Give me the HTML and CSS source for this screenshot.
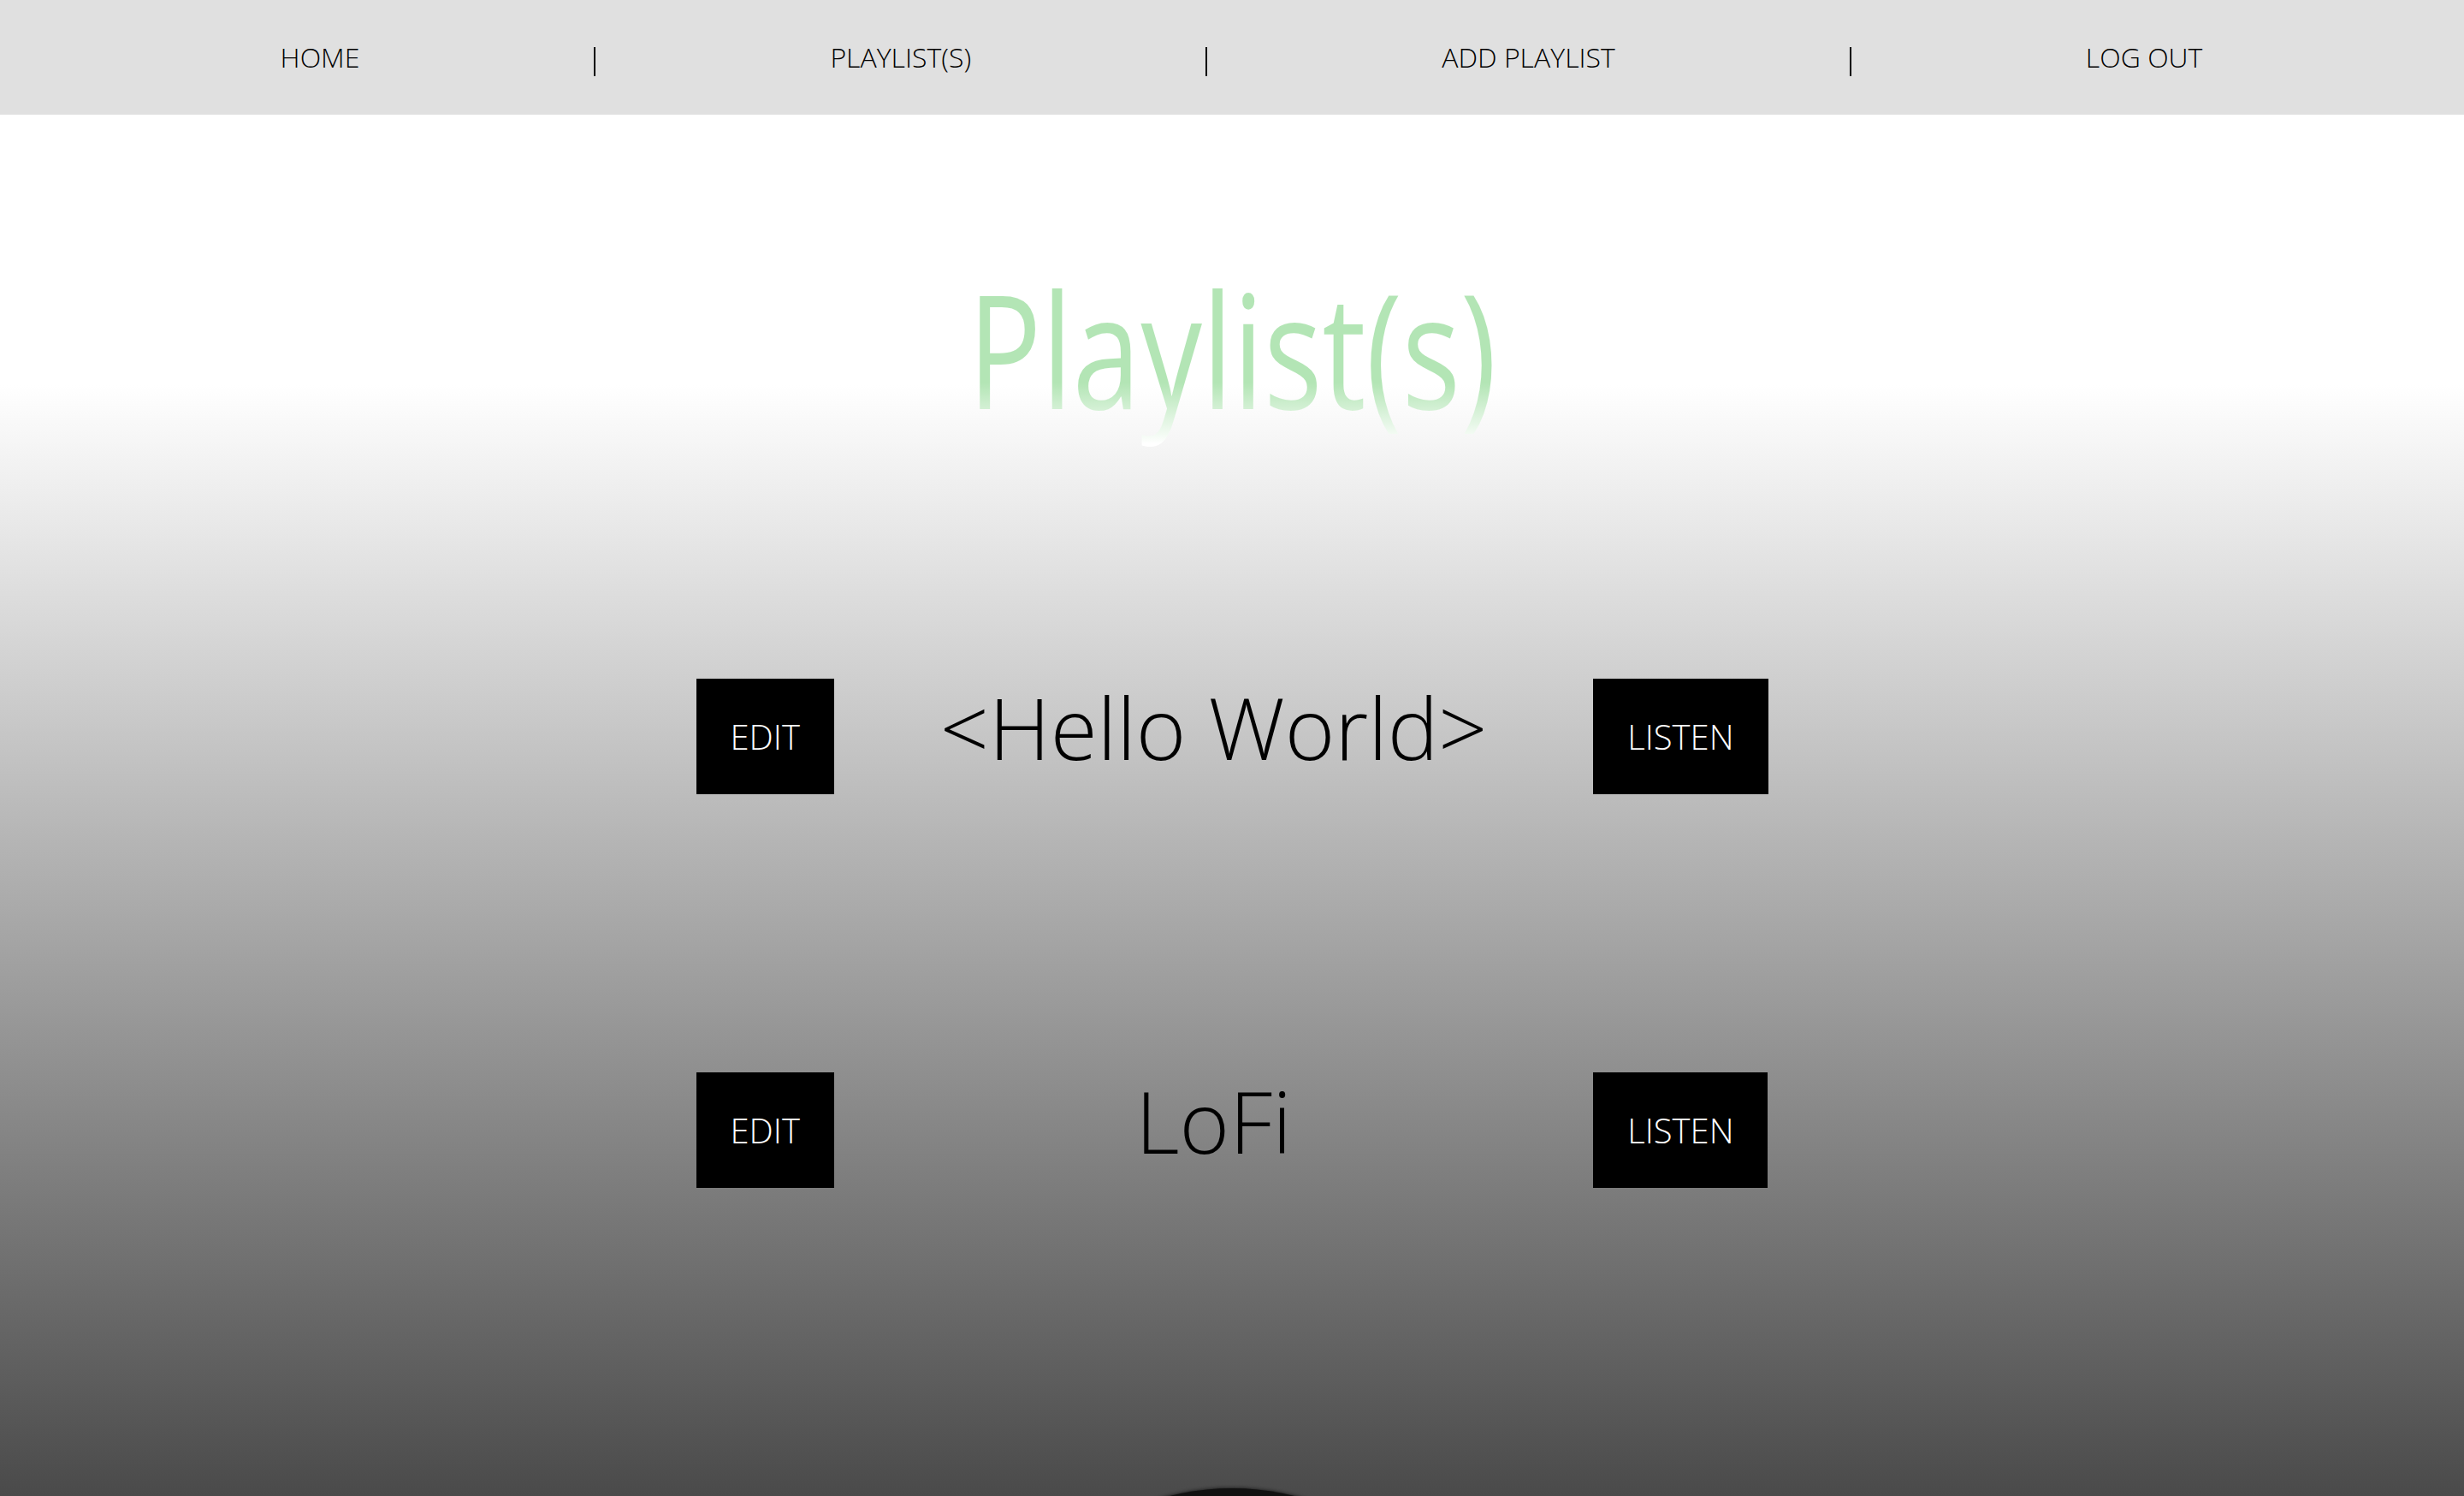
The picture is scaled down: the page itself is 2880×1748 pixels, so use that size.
FILE: index.html
```html
<!DOCTYPE html>
<html lang="en">
<head>
    <meta charset="UTF-8">
    <meta name="viewport" content="width=device-width, initial-scale=1.0">
    <title>Playlist(s)</title>
    <link rel="stylesheet" href="styles.css">
</head>
<body>

<nav class="topnav">
    <ul class="nav-links">
        <li><a href="#">HOME</a></li>
        <li class="sep"></li>
        <li><a href="#">PLAYLIST(S)</a></li>
        <li class="sep"></li>
        <li><a href="#">ADD PLAYLIST</a></li>
        <li class="sep"></li>
        <li><a href="#">LOG OUT</a></li>
    </ul>
</nav>

<main class="page">
    <h1 class="page-title"><span>Playlist(s)</span></h1>

    <ul class="playlists">
        <li class="playlist-row">
            <a class="btn" href="#">EDIT</a>
            <h2 class="playlist-name">&lt;Hello World&gt;</h2>
            <a class="btn" href="#">LISTEN</a>
        </li>
        <li class="playlist-row">
            <a class="btn" href="#">EDIT</a>
            <h2 class="playlist-name">LoFi</h2>
            <a class="btn" href="#">LISTEN</a>
        </li>
    </ul>

    <div class="record"></div>
</main>

</body>
</html>
```

FILE: styles.css
```css
:root {
    --nav-color: #e0e0e0;
    --title-color: #b3e5b5;
    --text-color: #000;
    --btn-color: #000;
}
body {
    margin: 0;
    font-family: "Open Sans", "Noto Sans", sans-serif;
    font-weight: 300;
    color: var(--text-color);
    background: linear-gradient(to bottom, #fff 0, #fff 450px, #4a4a4a 1748px);
    overflow: hidden;
}

/* barra superior */
.topnav {
    height: 134px;
    background-color: var(--nav-color);
    display: flex;
    align-items: center;
    justify-content: center;
}
.nav-links {
    list-style: none;
    margin: -2px 0 0;
    padding: 0 0 0 22px;
    display: flex;
    align-items: center;
    gap: 274px;
}
.nav-links a {
    color: var(--text-color);
    text-decoration: none;
    font-size: 32px;
    font-weight: 300;
}
.nav-links .sep {
    width: 2px;
    height: 34px;
    margin-top: 12px;
    background-color: #000;
}

.page {
    padding-top: 140px;
    text-align: center;
}

.page-title {
    margin: 0;
    font-size: 186px;
    font-weight: 400;
    line-height: 263px;
}
.page-title span {
    display: inline-block;
    transform: scaleX(0.77);
    background: linear-gradient(to bottom, var(--title-color) 66%, #fff 93%);
    -webkit-background-clip: text;
    background-clip: text;
    color: transparent;
}

.playlists {
    list-style: none;
    margin: 256px auto 0;
    padding: 0;
    width: 1253px;
    display: flex;
    flex-direction: column;
    gap: 325px;
}
.playlist-row {
    height: 135px;
    display: flex;
    align-items: center;
    justify-content: space-between;
}
.playlist-name {
    margin: 0 0 24px;
    font-size: 100px;
    font-weight: 300;
    line-height: 100px;
}

.btn {
    height: 135px;
    padding: 0 40px;
    display: flex;
    align-items: center;
    background-color: var(--btn-color);
    color: #fff;
    text-decoration: none;
    font-size: 40px;
    font-weight: 300;
}

/* disco que asoma por abajo */
.record {
    width: 600px;
    height: 600px;
    margin: 351px auto 0;
    border-radius: 50%;
    background-color: #111;
    box-shadow: 0 0 4px #111;
}
```
